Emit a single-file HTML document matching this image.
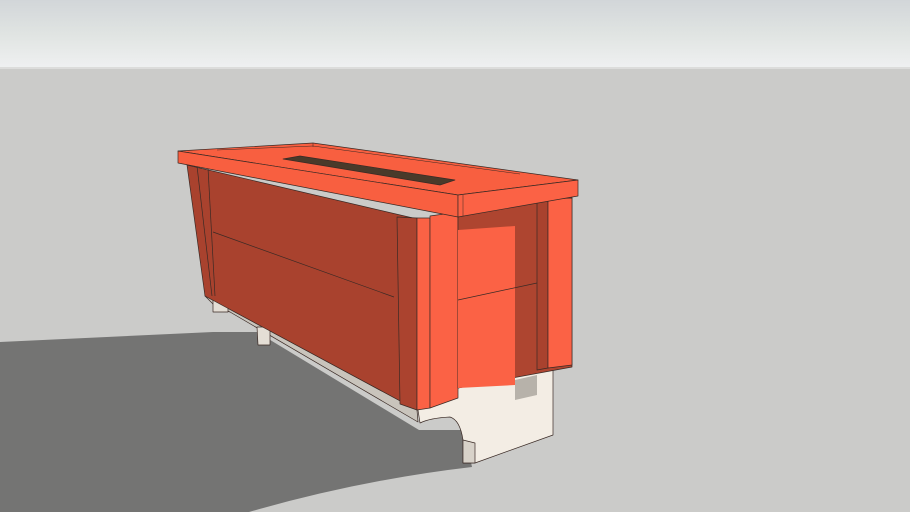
<!DOCTYPE html>
<html><head><style>
html,body{margin:0;padding:0;width:910px;height:512px;overflow:hidden;background:#cbcbc9}
</style></head><body>
<svg width="910" height="512" viewBox="0 0 910 512" xmlns="http://www.w3.org/2000/svg">
<defs>
<linearGradient id="sky" x1="0" y1="0" x2="0" y2="1">
<stop offset="0" stop-color="#d2d6d9"/><stop offset="0.5" stop-color="#e0e4e2"/><stop offset="1" stop-color="#eff0f1"/>
</linearGradient>
</defs>
<rect x="0" y="0" width="910" height="68" fill="url(#sky)"/>
<rect x="0" y="67" width="910" height="2" fill="#dcdcdb"/>
<rect x="0" y="69" width="910" height="443" fill="#cbcbc9"/>
<path d="M0,342 L213,332 L257,332 L419,430 L464,430 L472,467 Q360,480 249,512 L0,512 Z" fill="#747473"/>
<g stroke="#3a2a25" stroke-width="0.7" stroke-linejoin="round">
<polygon points="205,296 417,410 418,422 230,312 215,306" fill="#c9c4bc"/>
<polygon points="213,297 228,298 228,312 213,312" fill="#e4ded5"/>
<polygon points="257,327 270,327 270,345 258,345" fill="#e4ded5"/>
<path d="M418,410 L458,388 L553,367 L553,435 L475,463 L463,463 L463,440 Q460,420 450,417 Q430,418 420,423 Z" fill="#f3ede4"/>
<path d="M463,440 L475,443 L475,463 L463,463 Z" fill="#d8d2c9"/>
<polygon points="515,380 537,375 537,395 515,400" fill="#b7b2aa" stroke="none"/>
<polygon points="187,165 413,218 417,410 205,296" fill="#a9422e"/>
<line x1="197" y1="166" x2="212" y2="296"/>
<line x1="208" y1="168" x2="215" y2="296"/>
<line x1="213" y1="232" x2="394" y2="297"/>
<polygon points="397,217 417,218 417,410 400,404" fill="#ab432f"/>
<polygon points="417,218 430,218 430,408 417,410" fill="#fb6245"/>
<polygon points="430,216 458,212 458,398 430,408" fill="#fb6245"/>
<polygon points="458,210 572,196 572,367 458,388" fill="#ae4530"/>
<polygon points="458,230 515,226 515,385 458,388" fill="#fb6245" stroke="none"/>
<line x1="458" y1="300" x2="537" y2="283"/>
<polygon points="537,200 548,199 548,368 537,370" fill="#a9422e"/>
<polygon points="548,199 572,198 572,365 548,368" fill="#fb6245"/>
<polygon points="178,151 313,143 578,180 458,195" fill="#f85f40"/>
<polyline points="217,150 313,146 520,174" fill="none" stroke-width="0.5"/>
<line x1="313" y1="143" x2="313" y2="147" stroke-width="0.5"/>
<polygon points="283,159 300,156 455,180 440,185" fill="#4a3a2a"/>
<polygon points="178,151 458,195 458,217 178,163" fill="#f85f40"/>
<polygon points="458,195 578,180 578,196 458,217" fill="#fb6245"/>
<line x1="463" y1="195" x2="463" y2="216" stroke-width="0.5"/>
</g>
</svg>
</body></html>
